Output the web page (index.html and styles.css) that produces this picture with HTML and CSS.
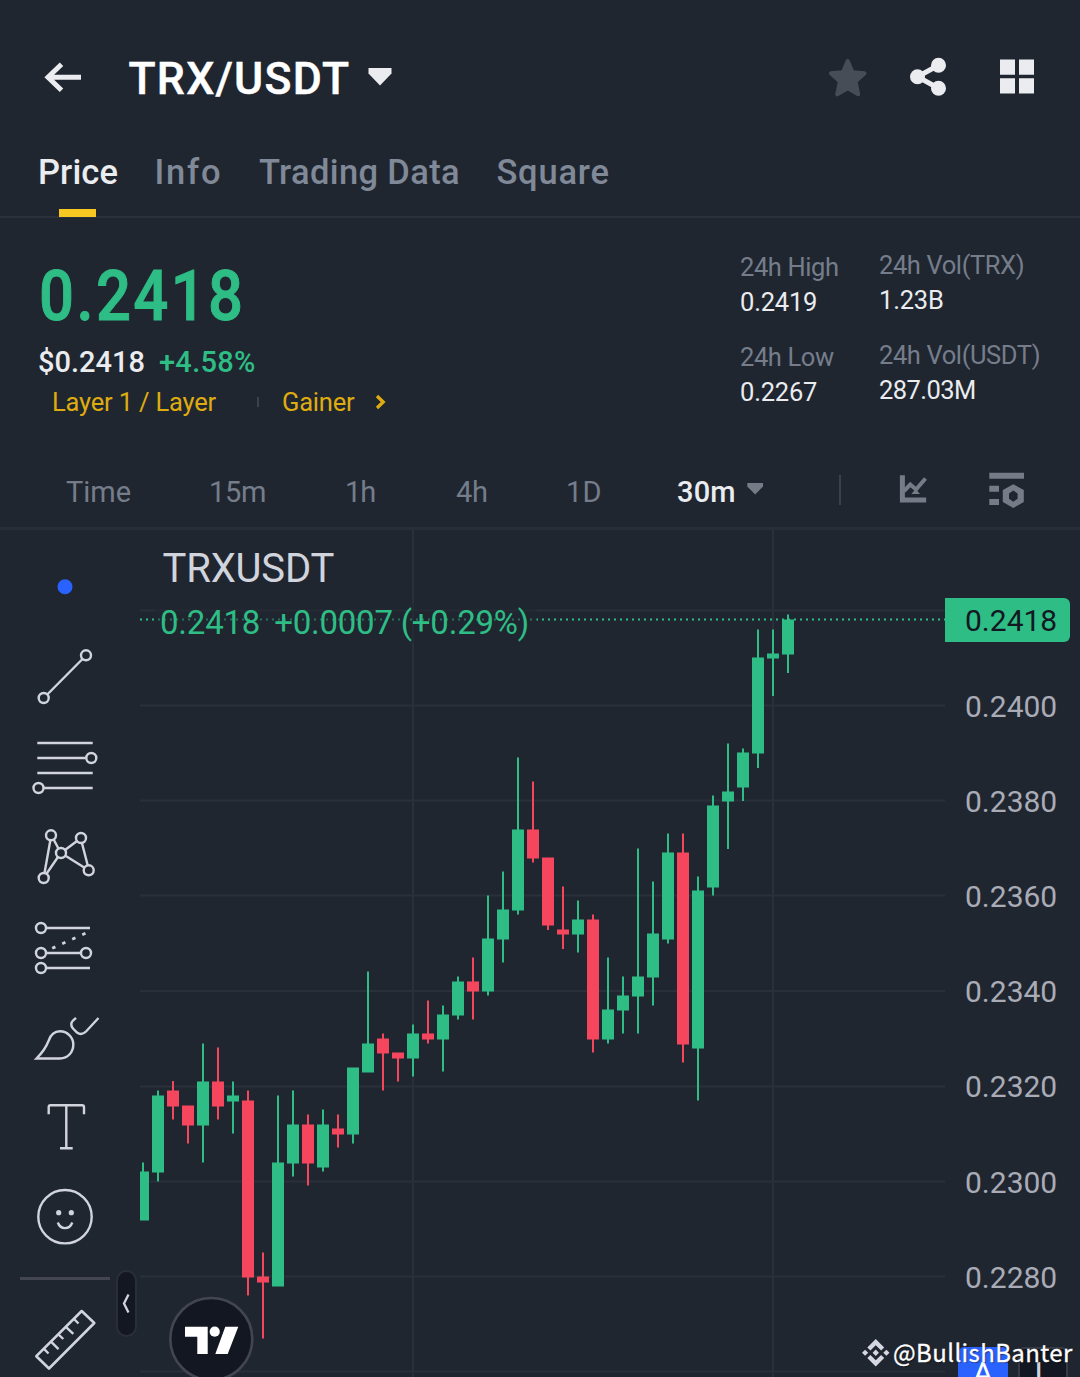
FILE: index.html
```html
<!DOCTYPE html>
<html lang="en">
<head>
<meta charset="utf-8">
<title>TRX/USDT</title>
<link rel="stylesheet" href="styles.css">
</head>
<body>
<div class="app">
  <header class="header">
    <svg class="back" viewBox="44 61 38 32"><path d="M81 77.300H48M61.500 64.300L48 77.300l13.500 13" fill="none" stroke="#eaecef" stroke-width="5"/></svg>
    <h1 class="title">TRX/USDT</h1>
    <svg class="title-caret" viewBox="368 68 24 18"><path d="M368.500 68h23v5.500L380 85.500 368.500 73.500z" fill="#eaecef"/></svg>
    <div class="actions">
      <svg class="star" viewBox="828 56 40 42"><path d="M847.700 61l4.800 11.200 12 1.100-9 8.200 2.700 12.800-10.500-6-10.500 6 2.700-12.800-9-8.200 12-1.100z" fill="#474d57" stroke="#474d57" stroke-width="4" stroke-linejoin="round"/></svg>
      <svg class="share" viewBox="909 56 38 42"><g fill="#eaecef"><circle cx="917.500" cy="76.700" r="7.500"/><circle cx="938.500" cy="65.200" r="7.500"/><circle cx="938.500" cy="88.300" r="7.500"/></g><path d="M938.500 65.200l-21 11.500 21 11.600" fill="none" stroke="#eaecef" stroke-width="5"/></svg>
      <svg class="grid-icon" viewBox="1000 59 34 36"><path d="M1000 59.500h15v15.200h-15zM1019 59.500h15v15.200h-15zM1000 78.300h15v15.200h-15zM1019 78.300h15v15.200h-15z" fill="#eaecef"/></svg>
    </div>
  </header>

  <nav class="tabs">
    <a class="tab tab-active">Price</a>
    <a class="tab tab-info">Info</a>
    <a class="tab">Trading Data</a>
    <a class="tab tab-square">Square</a>
  </nav>

  <section class="quote">
    <div class="quote-main">
      <div class="price">0.2418</div>
      <div class="fiat"><span>$0.2418</span><span class="change">+4.58%</span></div>
      <div class="tags">
        <span>Layer 1 / Layer</span><i class="tag-sep"></i><span>Gainer</span>
        <svg class="tag-arrow" viewBox="375 394 12 16"><path d="M377 396l6.200 6-6.200 6" fill="none" stroke="#dfac10" stroke-width="3.300"/></svg>
      </div>
    </div>
    <dl class="stats">
      <dt>24h High</dt><dd>0.2419</dd>
      <dt>24h Low</dt><dd>0.2267</dd>
    </dl>
    <dl class="stats stats-volume">
      <dt>24h Vol(TRX)</dt><dd>1.23B</dd>
      <dt>24h Vol(USDT)</dt><dd class="tight">287.03M</dd>
    </dl>
  </section>

  <nav class="intervals">
    <div class="interval-list">
      <span>Time</span><span class="tight">15m</span><span class="tighter">1h</span><span class="tight">4h</span><span class="loose">1D</span><b>30m</b>
    </div>
    <svg class="interval-caret" viewBox="747 483 16 12"><path d="M747.300 483h15.700v3.500L755.200 494.500l-7.900-8z" fill="#757b87"/></svg>
    <i class="interval-sep"></i>
    <svg class="chart-icon" viewBox="899 474 28 30"><path d="M902.400 475.300v24.600h23.800" fill="none" stroke="#757b87" stroke-width="5"/><path d="M904 491l6.300-6.500 5.700 5 9.500-11" fill="none" stroke="#757b87" stroke-width="4"/><path d="M911.300 494l4.400-5 4.300 5z" fill="#757b87"/></svg>
    <svg class="settings-icon" viewBox="989 472 36 37"><path d="M989.300 472.700H1024v6h-34.700zM989.300 485.700h9.700v6h-9.700zM989.300 499h9.700v6h-9.700z" fill="#757b87"/><path fill-rule="evenodd" d="M1013.300 484.200l10.500 5.800v12l-10.500 6-10.500-6v-12zM1013.300 490.500l-4.300 3v5.200l4.300 3 4.300-3v-5.200z" fill="#757b87"/></svg>
  </nav>

  <main class="chart">
    <aside class="tools">
      <svg class="tool" viewBox="0 542 140 90"><circle cx="65" cy="586.700" r="7.500" fill="#2962ff"/></svg>
      <svg class="tool" viewBox="0 632 140 90"><circle cx="86" cy="655.300" r="5"/><circle cx="43.700" cy="698" r="5"/><path d="M82.500 659L47.300 694.500"/></svg>
      <svg class="tool" viewBox="0 722 140 90"><path d="M37.300 743h55.400M37.300 758h48.500M37.300 773h55.400M44 788h48.700"/><circle cx="91.300" cy="758" r="5"/><circle cx="38.500" cy="788" r="5"/></svg>
      <svg class="tool" viewBox="0 812 140 90"><circle cx="51" cy="835.300" r="5"/><circle cx="81" cy="838" r="5"/><circle cx="61" cy="853" r="5"/><circle cx="43.700" cy="878" r="5"/><circle cx="88.700" cy="870.300" r="5"/><path d="M50.300 840.500L44.600 872.500M53.800 839.800l4.500 8.500M57.800 857.300L46.700 873.500M65 850l11.700-8.800M65.500 855.700l18.700 11.800M82 843.200l5.700 22"/></svg>
      <svg class="tool" viewBox="0 902 140 90"><circle cx="41" cy="928" r="5"/><circle cx="41" cy="953" r="5"/><circle cx="86" cy="953" r="5"/><circle cx="41" cy="968" r="5"/><path d="M46.300 928H90M46.300 953h34.500M46.300 968H90"/><path stroke-dasharray="3.500 7.500" stroke-width="2.800" d="M52.200 948.300L86 933"/></svg>
      <svg class="tool" viewBox="0 992 140 90"><path d="M36.500 1058.500H60C68 1058.500 73.300 1052 73.300 1044.500C73.300 1037 67 1031.300 60 1031.300C54 1031.300 50.500 1035 48.500 1041C46 1047.500 42 1053 36.500 1058.500zM76 1017.800L73 1020.500Q69.500 1024 73 1028.500L77 1032.500Q81.500 1036 86 1031.500L98.500 1018"/></svg>
      <svg class="tool" viewBox="0 1082 140 90"><path d="M48.700 1114.300V1107Q48.700 1105.300 50.500 1105.300H82Q84 1105.300 84 1107V1114.300M66.300 1105.300V1148M60 1148.300h12.700"/></svg>
      <svg class="tool" viewBox="0 1172 140 90"><circle cx="65" cy="1216.700" r="26.700"/><path d="M57.800 1222.500C60.500 1230 69.500 1230 72.300 1222.500"/><g class="solid"><circle cx="58.700" cy="1212.700" r="2.600"/><circle cx="71.300" cy="1212.700" r="2.600"/></g></svg>
      <hr class="tool-rule">
      <svg class="tool" viewBox="0 1295 140 90"><path d="M81.700 1311L94.300 1323 49 1368.500 36.300 1356.200z" stroke-linejoin="round" stroke-width="2.600"/><path d="M43.500 1348.300l5 5.200M50.500 1341.200l8 8M57.800 1333.800l5.500 5.200M65.300 1326.300l8 7.500M73.500 1318.500l5 5"/></svg>
    </aside>

    <div class="plot">
      <svg class="plot-canvas" viewBox="140 530 805 847">
        <path class="gridline" d="M140 610.500h805M140 705.500h805M140 800.500h805M140 895.500h805M140 991h805M140 1086.500h805M140 1181.500h805M140 1276.500h805M140 1371.500h805M413 530v847M773 530v847"/>
        <path class="last-price" d="M140 619.500h805"/>
        <path class="wick up" d="M143 1162.500V1220M158 1090.500V1181.500M203 1043.500V1162.500M233 1081.500V1133.500M278 1095.500V1286M293 1090.500V1176.500M323 1109.500V1171.500M353 1068V1143.500M368 971.500V1072M413 1024.500V1076.500M443 1005.500V1071.500M458 976.500V1019.500M488 895.500V995.500M503 871.500V962.500M518 757.500V914.500M578 900.500V952.500M608 957.500V1043.500M623 976.500V1033.500M638 848.500V1033.500M653 881.500V1005.500M668 833.500V943.500M698 876.500V1100.500M713 795.500V895.500M728 743.500V849M743 748.500V801M758 629.500V768M773 629.500V696M788 614.500V673"/>
        <path class="wick down" d="M173 1081V1119.500M188 1106V1143.500M218 1047.500V1119.500M248 1090.500V1295.500M263 1252.500V1338.500M308 1114.500V1185.500M338 1114.500V1147.500M383 1033.500V1090.500M398 1053V1081.500M428 1000.500V1043.500M473 957.500V1019.500M533 781.500V862.500M548 858V930M563 886.500V949M593 914.500V1052.500M683 833.500V1062.500"/>
        <path class="body up" d="M140 1171.500h9V1220.500h-9zM152 1095.500h12V1172.500h-12zM197 1081.500h12V1125.500h-12zM227 1095.500h12V1101.500h-12zM272 1162.500h12V1286.500h-12zM287 1124.500h12V1163.500h-12zM317 1124.500h12V1167.500h-12zM347 1067.500h12V1134.500h-12zM362 1043.500h12V1072.500h-12zM407 1033.500h12V1058.500h-12zM437 1014.500h12V1039.500h-12zM452 981.500h12V1015.500h-12zM482 938.500h12V991.500h-12zM497 909.500h12V939.500h-12zM512 829.500h12V910.500h-12zM572 919.500h12V934.500h-12zM602 1009.500h12V1039.500h-12zM617 995.500h12V1010.500h-12zM632 976.500h12V996.500h-12zM647 933.500h12V977.500h-12zM662 852.500h12V939.500h-12zM692 890.500h12V1048.500h-12zM707 805.500h12V887.500h-12zM722 791.500h12V801.500h-12zM737 752.500h12V787.500h-12zM752 657.500h12V753.500h-12zM767 653.500h12V658.500h-12zM782 619.500h12V654.500h-12z"/>
        <path class="body down" d="M167 1090.500h12V1106.500h-12zM182 1105.500h12V1125.500h-12zM212 1081.500h12V1106.500h-12zM242 1100.500h12V1277.500h-12zM257 1276.500h12V1282.500h-12zM302 1124.500h12V1163.500h-12zM332 1128.500h12V1134.500h-12zM377 1038.500h12V1053.500h-12zM392 1052.500h12V1058.500h-12zM422 1033.500h12V1039.500h-12zM467 981.500h12V991.500h-12zM527 829.500h12V858.500h-12zM542 857.500h12V925.500h-12zM557 929.500h12V934.500h-12zM587 919.500h12V1039.500h-12zM677 852.500h12V1044.500h-12z"/>
        <circle cx="211.300" cy="1339" r="41" fill="#131722" stroke="#434651" stroke-width="2.600"/>
        <path d="M185 1326.700h22.700V1354h-10.400V1336.700H185zM225.300 1326.700h13L227.700 1354h-12.400z" fill="#fff"/><circle cx="214.700" cy="1331.700" r="5.100" fill="#fff"/>
      </svg>
      <div class="legend">
        <div class="legend-symbol">TRXUSDT</div>
        <div class="legend-values"><span>0.2418</span><span>+0.0007</span><span>(+0.29%)</span></div>
      </div>
    </div>

    <div class="axis">
      <span>0.2400</span><span>0.2380</span><span>0.2360</span><span>0.2340</span><span>0.2320</span><span>0.2300</span><span>0.2280</span>
      <div class="scale-modes"><div class="mode mode-on">A</div><div class="mode">L</div></div>
      <div class="badge">0.2418</div>
    </div>

    <div class="collapse"><svg viewBox="122 1293 8 21"><path d="M128.500 1294.500l-4.500 9 4.500 9" fill="none" stroke="#d1d4dc" stroke-width="2.300"/></svg></div>

    <div class="watermark">
      <svg viewBox="0 0 126.600 126.600"><path fill="#d5d8e2" d="M38.730 53.200l24.590-24.580 24.600 24.600 14.300-14.310L63.320 0 24.420 38.900zM0 63.310l14.300-14.310 14.310 14.310-14.310 14.300zM38.730 73.410l24.590 24.590 24.600-24.600 14.310 14.290-38.910 38.910-38.910-38.880zM98 63.310l14.300-14.310 14.310 14.300-14.310 14.320zM77.830 63.300L63.320 48.780 48.800 63.300l14.520 14.520z"/></svg>
      <span>@BullishBanter</span>
    </div>
  </main>
</div>
</body>
</html>
```
FILE: styles.css
```css
* { box-sizing: border-box; margin: 0; padding: 0; }

body {
  background: #202630;
  color: #eaecef;
  font-family: Roboto, "Liberation Sans", sans-serif;
}

svg { display: block; flex: none; }

.app {
  width: 1080px;
  height: 1377px;
  overflow: hidden;
  display: flex;
  flex-direction: column;
}

/* Header */
.header {
  height: 104px;
  padding: 50px 46px 0 44px;
  display: flex;
  align-items: center;
  flex: none;
}
.back { width: 38px; height: 32px; }
.title {
  margin-left: 46.5px;
  font-size: 44.5px;
  line-height: 54px;
  font-weight: 500;
  letter-spacing: 1.25px;
  padding-top: 3px;
  color: #fff;
  -webkit-text-stroke: .5px #fff;
}
.title-caret { width: 24px; height: 18px; margin-left: 18px; }
.actions { margin-left: auto; display: flex; align-items: center; }
.star { width: 40px; height: 42px; }
.share { width: 38px; height: 42px; margin-left: 41px; }
.grid-icon { width: 34px; height: 36px; margin-left: 53px; }

/* Tabs */
.tabs {
  height: 114px;
  flex: none;
  padding: 48px 38px 0;
  display: flex;
  gap: 36.5px;
  border-bottom: 2px solid #2a313b;
}
.tab {
  position: relative;
  font-size: 34.5px;
  line-height: 40px;
  font-weight: 500;
  letter-spacing: .35px;
  color: #808998;
}
.tab-active { color: #eaecef; letter-spacing: .1px; }
.tab-info { letter-spacing: 1.8px; }
.tab-square { letter-spacing: .8px; }
.tab-active::after {
  content: "";
  position: absolute;
  left: 21px;
  top: 57px;
  width: 37px;
  height: 8px;
  background: #f8c822;
}

/* Quote */
.quote { height: 239px; flex: none; display: flex; }
.quote-main { width: 740px; padding: 38px 0 0 38px; }
.price {
  margin-left: 1px;
  font-size: 70px;
  line-height: 80px;
  font-weight: 500;
  letter-spacing: 2.7px;
  color: #2ebd85;
  -webkit-text-stroke: 1px #2ebd85;
  transform: scaleX(.88);
  transform-origin: left;
}
.fiat {
  margin-top: 8px;
  display: flex;
  gap: 14px;
  font-size: 29px;
  line-height: 37px;
  font-weight: 500;
}
.change { color: #2ebd85; letter-spacing: .3px; }
.tags {
  margin: 3px 0 0 14px;
  display: flex;
  align-items: center;
  font-size: 25.5px;
  line-height: 36px;
  letter-spacing: -.19px;
  color: #dfac10;
}
.tag-sep { width: 2px; height: 10px; margin: 0 23px 0 41px; background: #3a414c; }
.tag-arrow { width: 12px; height: 16px; margin-left: 20px; }
.stats {
  width: 139px;
  padding-top: 32px;
  font-size: 25.5px;
  line-height: 35px;
  white-space: nowrap;
}
.stats dt { color: #757d8b; letter-spacing: -.4px; }
.stats dd { letter-spacing: -.2px; margin-bottom: 20px; }
.stats dd.tight { letter-spacing: -.56px; }
.stats-volume { padding-top: 30px; }

/* Intervals */
.intervals {
  height: 73px;
  flex: none;
  padding-left: 66px;
  display: flex;
  align-items: center;
  border-bottom: 3px solid #272e38;
}
.interval-list {
  display: grid;
  grid-template-columns: 143px 136px 111px 110px 111px 70px;
  font-size: 29px;
  line-height: 36px;
  color: #757d8b;
}
.interval-list b { font-weight: 500; letter-spacing: .2px; color: #eaecef; }
.tight { letter-spacing: -.3px; }
.tighter { letter-spacing: -1px; }
.loose { letter-spacing: .2px; }
.interval-caret { width: 16px; height: 12px; margin-top: -6px; }
.interval-sep { width: 2px; height: 30px; margin: -4px 0 0 76px; background: #3a414c; }
.chart-icon { width: 28px; height: 30px; margin: -6px 0 0 58px; }
.settings-icon { width: 36px; height: 37px; margin: -3px 0 0 62px; }

/* Chart */
.chart { position: relative; height: 847px; flex: none; display: flex; }
.tools { width: 140px; padding-top: 12px; }
.tool {
  width: 140px;
  height: 90px;
  fill: none;
  stroke: #d1d4dc;
  stroke-width: 2.4;
}
.tool .solid { fill: #d1d4dc; stroke: none; }
.tool circle[fill] { stroke: none; }
.tool-rule { border: 0; width: 90px; height: 3px; margin: 15px 0 15px 20px; background: #434651; }

.plot { position: relative; width: 805px; }
.plot-canvas { width: 805px; height: 847px; }
.gridline { stroke: #2a303a; stroke-width: 2; fill: none; }
.last-price { stroke: #2ebd85; stroke-width: 2; stroke-dasharray: 2 4; }
.wick { stroke-width: 2; fill: none; }
.wick.up { stroke: #2ebd85; }
.wick.down { stroke: #f6465d; }
.body.up { fill: #2ebd85; }
.body.down { fill: #f6465d; }

.legend { position: absolute; left: 14px; top: 15px; }
.legend-symbol {
  padding-left: 8.5px;
  font-size: 40px;
  line-height: 48px;
  letter-spacing: -.17px;
  color: #d1d4dc;
}
.legend-values {
  display: flex;
  margin-top: 10px;
  padding: 0 8px 0 6px;
  font-size: 33px;
  line-height: 40px;
  letter-spacing: -.22px;
  color: #2ebd85;
  background: rgba(32, 38, 48, .5);
}
.legend-values span + span { margin-left: 14px; }
.legend-values span + span + span { margin-left: 8px; }

.axis {
  position: relative;
  width: 135px;
  padding: 128.500px 0 0 20px;
  display: flex;
  flex-direction: column;
  font-size: 30px;
  line-height: 95.2px;
  color: #a9acb6;
}
.badge {
  position: absolute;
  left: 0;
  top: 67.5px;
  width: 125px;
  height: 44px;
  padding-left: 20px;
  line-height: 45px;
  border-radius: 0 6px 6px 0;
  background: #2ebd85;
  color: #131722;
}
.scale-modes { display: flex; gap: 10px; margin: 22px 0 0 -7px; }
.mode {
  width: 50px;
  height: 52px;
  flex: none;
  border: 2px solid #363a45;
  border-radius: 6px;
  background: #131722;
  color: #d1d4dc;
  font-size: 32px;
  line-height: 49px;
  text-align: center;
}
.mode-on { background: #2962ff; border-color: #2962ff; color: #fff; }

.collapse {
  position: absolute;
  left: 115.5px;
  top: 740px;
  width: 21.5px;
  height: 67px;
  display: flex;
  align-items: center;
  justify-content: center;
  border: 2px solid #2a2e39;
  border-radius: 11px;
  background: #131722;
}
.collapse svg { width: 8px; height: 21px; }

.watermark {
  position: absolute;
  left: 862px;
  top: 804px;
  display: flex;
  align-items: center;
  gap: 3.500px;
  font-family: "Noto Sans CJK SC", sans-serif;
  font-size: 24px;
  line-height: 36px;
  letter-spacing: .39px;
  color: #fff;
  -webkit-text-stroke: .3px #fff;
  text-shadow: 1px 1px 1px rgba(0, 0, 0, .5);
}
.watermark svg { width: 27.500px; height: 27.500px; margin-top: 2px; }
```
